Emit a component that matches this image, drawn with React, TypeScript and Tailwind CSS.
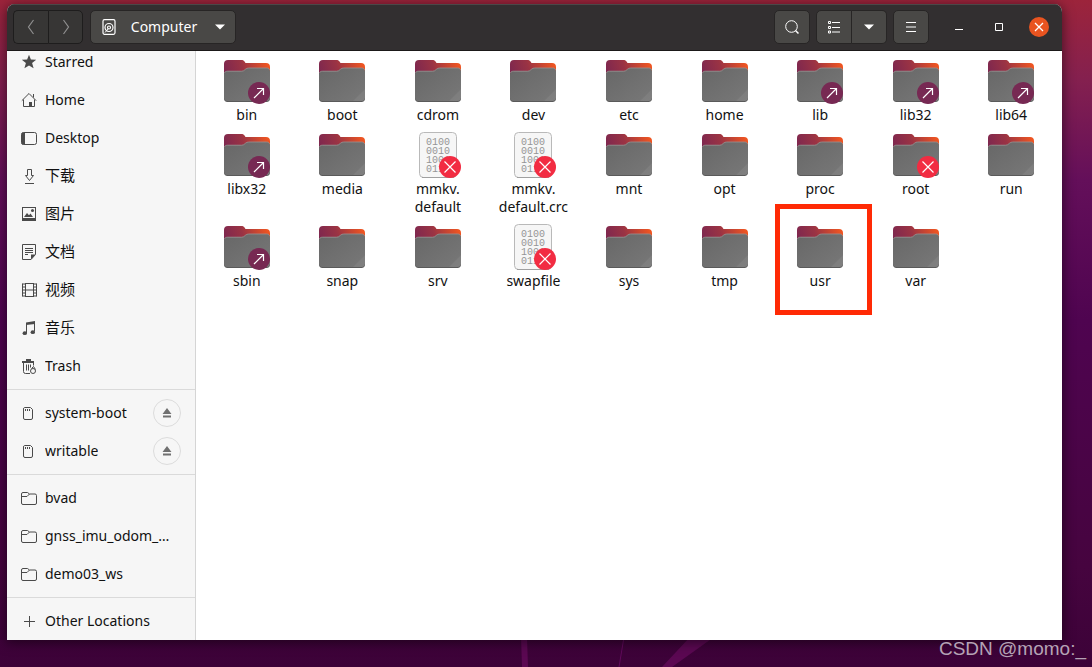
import type { ReactNode } from "react";

type Badge = "link" | "locked";

interface Entry {
  name: string;
  lines?: string[];
  kind?: "folder" | "binary";
  badge?: Badge;
  marked?: boolean;
}

const entries: Entry[] = [
  { name: "bin", badge: "link" },
  { name: "boot" },
  { name: "cdrom" },
  { name: "dev" },
  { name: "etc" },
  { name: "home" },
  { name: "lib", badge: "link" },
  { name: "lib32", badge: "link" },
  { name: "lib64", badge: "link" },
  { name: "libx32", badge: "link" },
  { name: "media" },
  { name: "mmkv.default", lines: ["mmkv.", "default"], kind: "binary", badge: "locked" },
  { name: "mmkv.default.crc", lines: ["mmkv.", "default.crc"], kind: "binary", badge: "locked" },
  { name: "mnt" },
  { name: "opt" },
  { name: "proc" },
  { name: "root", badge: "locked" },
  { name: "run" },
  { name: "sbin", badge: "link" },
  { name: "snap" },
  { name: "srv" },
  { name: "swapfile", kind: "binary", badge: "locked" },
  { name: "sys" },
  { name: "tmp" },
  { name: "usr", marked: true },
  { name: "var" },
];

function Icon({ children, size = 16 }: { children: ReactNode; size?: number }) {
  return (
    <svg
      width={size}
      height={size}
      viewBox="0 0 16 16"
      fill="none"
      stroke="currentColor"
      className="shrink-0"
      aria-hidden="true"
    >
      {children}
    </svg>
  );
}

const StarIcon = () => (
  <Icon>
    <path
      d="M8 .8l1.900 4.800 5.300.2-4.100 3.300 1.500 5.200L8 11.500l-4.600 2.800 1.500-5.200L.8 5.800l5.300-.2z"
      fill="currentColor"
      stroke="none"
    />
  </Icon>
);

const HomeIcon = () => (
  <Icon>
    <path d="M.8 8.700L8 1.500l7.200 7.200M2.500 7.500v7h11v-7M12.500 2v3.500" />
    <path d="M8 10h3v5H8z" fill="currentColor" stroke="none" />
  </Icon>
);

const DesktopIcon = () => (
  <Icon>
    <rect x=".5" y="2.500" width="15" height="12" rx="2" />
    <path d="M2 2.500h2v12H2a1.500 1.500 0 0 1-1.500-1.500V4A1.500 1.500 0 0 1 2 2.500z" fill="currentColor" stroke="none" />
  </Icon>
);

const DownloadIcon = () => (
  <Icon>
    <path d="M6.500 1.500h4v6h2l-4 5-4-5h2zM4 15.500h9" />
  </Icon>
);

const PicturesIcon = () => (
  <Icon>
    <rect x="1.500" y="1.500" width="13" height="13" />
    <path d="M1.500 12h13v2.500h-13zM3 11l3-4 2 2.200L9.500 7.500 12 11z" fill="currentColor" stroke="none" />
    <circle cx="11.500" cy="4.500" r="1.500" fill="currentColor" stroke="none" />
  </Icon>
);

const DocumentsIcon = () => (
  <Icon>
    <path d="M10 15.500H1.500v-15h13v10M4 4.500h8M4 6.500h8M4 8.500h8M4 10.500h3M10 15.500l4.500-5" />
    <path d="M10 15.500v-5h4.500z" fill="currentColor" stroke="none" />
  </Icon>
);

const VideosIcon = () => (
  <Icon>
    <path d="M4.500 1.500h8v13h-8zM4.500 8h8M4 1.500h9M4 14.500h9" />
    <path d="M1.500 1.500v13M15.500 1.500v13" />
    <path d="M3 1.500v13M14 1.500v13" strokeWidth="3" strokeDasharray="1 2" />
  </Icon>
);

const MusicIcon = () => (
  <Icon>
    <path d="M5.500 13V3.500M13.500 11.500V2" />
    <path d="M5 2.500L14 1v3L5 5z" fill="currentColor" stroke="none" />
    <ellipse cx="3.800" cy="13.200" rx="2.200" ry="1.900" fill="currentColor" stroke="none" />
    <ellipse cx="11.800" cy="12.200" rx="2.200" ry="1.900" fill="currentColor" stroke="none" />
  </Icon>
);

const TrashIcon = () => (
  <Icon>
    <path d="M1 3h12v2H1zM5 1h5v2H5z" fill="currentColor" stroke="none" />
    <path d="M2.500 4v9.500a2 2 0 0 0 2 2H9M12.500 4v3.500M5.500 6.500v6M7.500 6.500v6M9.500 6.500v3" />
    <circle cx="12" cy="13" r="2.500" />
    <path d="M10.500 10.500l2-2 2 3" />
  </Icon>
);

const CardIcon = () => (
  <Icon>
    <path d="M3.500 2.500h6l2 2V13a1.500 1.500 0 0 1-1.500 1.500H4A1.500 1.500 0 0 1 2.500 13V4a1.500 1.500 0 0 1 1-1.500z" />
    <path d="M4.500 4v2M6.500 4v2M8.500 4v2" />
  </Icon>
);

const FolderOutlineIcon = () => (
  <Icon>
    <path d="M.5 13v-9a1.500 1.500 0 0 1 1.500-1.500h4.500L8.500 4H14a1.500 1.500 0 0 1 1.500 1.500V13a1.500 1.500 0 0 1-1.500 1.500H2A1.500 1.500 0 0 1 .5 13z" />
    <path d="M.5 6.500H6L8.500 4" />
  </Icon>
);

const PlusIcon = () => (
  <Icon>
    <path d="M8.500 3v11M3 8.500h11" />
  </Icon>
);

const CaretIcon = () => (
  <svg width="10" height="6" viewBox="0 0 10 6" fill="currentColor" aria-hidden="true">
    <path d="M0 .5h10L5 5.500z" />
  </svg>
);

const places = [
  { label: "Starred", icon: <StarIcon /> },
  { label: "Home", icon: <HomeIcon /> },
  { label: "Desktop", icon: <DesktopIcon /> },
  { label: "下载", icon: <DownloadIcon />, cjk: true },
  { label: "图片", icon: <PicturesIcon />, cjk: true },
  { label: "文档", icon: <DocumentsIcon />, cjk: true },
  { label: "视频", icon: <VideosIcon />, cjk: true },
  { label: "音乐", icon: <MusicIcon />, cjk: true },
  { label: "Trash", icon: <TrashIcon /> },
];

const drives = ["system-boot", "writable"];
const bookmarks = ["bvad", "gnss_imu_odom_…", "demo03_ws"];

function BadgeMark({ type }: { type: Badge }) {
  return type === "link" ? (
    <g>
      <circle cx="36" cy="36" r="11" fill="#772953" />
      <path d="M31 41l9.500-9.500M34 31.500h6.500V38" fill="none" stroke="#fff" strokeWidth="1.200" />
    </g>
  ) : (
    <g>
      <circle cx="36" cy="36" r="11" fill="#f22c42" />
      <path d="M30.500 30.500l11 11M41.500 30.500l-11 11" stroke="#fff" strokeWidth="1.200" />
    </g>
  );
}

function EntryIcon({ kind = "folder", badge }: Entry) {
  return (
    <svg width="48" height="48" viewBox="0 0 48 48" aria-hidden="true">
      {kind === "folder" ? (
        <g>
          <path
            d="M1 7a4 4 0 0 1 4-4h13.500c1.500 0 2.300.5 3 1.500l1 1.500H43a4 4 0 0 1 4 4v20H1z"
            fill="url(#folder-back)"
          />
          <path
            d="M1 20.500c0-2.500 1.200-3.500 3.500-3.500h14.300c1.400 0 2-.4 2.900-1.400l.8-.9c1-1.100 1.800-1.700 3.300-1.700h17.700c2.300 0 3.500 1.200 3.500 3.500v25c0 2.300-1.200 3.500-3.500 3.500h-39C2.200 45 1 43.800 1 41.500z"
            fill="#5a5a5a"
          />
          <path
            d="M1 17.500c0-2.500 1.200-3.500 3.500-3.500h14.300c1.400 0 2-.4 2.900-1.400l.8-.4c1-.8 1.800-1.200 3.300-1.200h17.700c2.300 0 3.500 1.200 3.500 3.500v26c0 2.300-1.200 3.500-3.500 3.500h-39C2.200 44 1 42.800 1 40.500z"
            fill="url(#folder-front)"
          />
          <path
            d="M1.500 16c.4-1.200 1.300-1.800 3-1.800h14.300c1.400 0 2.100-.5 2.900-1.300l.8-.7c1-.8 1.800-1.200 3.300-1.200h17.700c1.700 0 2.700.6 3 1.800"
            fill="none"
            stroke="#9b9292"
            strokeWidth=".8"
          />
          <path d="M47 32L35 44h8.500c2.300 0 3.500-1.200 3.500-3.500z" fill="#fff" opacity=".06" />
        </g>
      ) : (
        <g>
          <rect x="5.500" y="1.500" width="37" height="45" rx="4" fill="#f6f6f6" stroke="#b9b9b9" />
          <path d="M8 46.500h32" stroke="#a0a0a0" />
          <g fill="#959595" fontFamily="Liberation Mono" fontSize="10">
            <text x="12" y="14">0100</text>
            <text x="12" y="23">0010</text>
            <text x="12" y="32">1001</text>
            <text x="12" y="41">0110</text>
          </g>
        </g>
      )}
      {badge && <BadgeMark type={badge} />}
    </svg>
  );
}

function EntryTile(entry: Entry) {
  const lines = entry.lines ?? [entry.name];
  return (
    <li className="relative flex flex-col items-center gap-px pb-[7px]">
      <EntryIcon {...entry} />
      <span className="text-center leading-[18px]">
        {lines.map((line) => (
          <span key={line} className="block">
            {line}
          </span>
        ))}
      </span>
      {entry.marked && (
        <span className="absolute -top-[19px] left-[3px] h-[111px] w-[97px] border-[5px] border-[#ff2a05]" />
      )}
    </li>
  );
}

interface SideRowProps {
  icon: ReactNode;
  label: string;
  cjk?: boolean;
  children?: ReactNode;
}

function SideRow({ icon, label, cjk, children }: SideRowProps) {
  return (
    <li className="flex h-[38px] items-center px-[14px]">
      <a href="#" className="flex min-w-0 flex-1 items-center gap-2">
        <span className="text-[#4a4a4a]">{icon}</span>
        <span className={`truncate pb-[2px] ${cjk ? "text-[15px]" : ""}`}>{label}</span>
      </a>
      {children}
    </li>
  );
}

const Divider = () => <hr className="my-1 border-[#dadada]" />;

function HeaderBar() {
  const btn =
    "flex h-[34px] items-center justify-center border border-[#272525] bg-[#494846] text-white";
  const nav = "flex h-[34px] w-[35px] items-center justify-center border border-[#1e1d1d] bg-[#373635] text-[#8f8f8f]";
  return (
    <header className="flex h-[47px] shrink-0 items-center border-b border-[#1b1919] bg-[#322f30] pr-[13px] pl-[6px] shadow-[inset_0_1px_0_#4b4848]">
      <div className="flex">
        <button aria-label="Back" className={`${nav} rounded-l-[5px] border-r-0`}>
          <Icon>
            <path d="M10.500 1L5.500 8l5 7" strokeWidth="1.200" />
          </Icon>
        </button>
        <button aria-label="Forward" className={`${nav} rounded-r-[5px]`}>
          <Icon>
            <path d="M5.500 1l5 7-5 7" strokeWidth="1.200" />
          </Icon>
        </button>
      </div>
      <button className={`${btn} ml-[7px] w-[146px] rounded-[5px]`}>
        <Icon>
          <rect x="2" y=".7" width="12" height="14.600" rx="1.500" strokeWidth="1.200" />
          <circle cx="8" cy="8.500" r="4" strokeWidth="1.200" />
          <circle cx="8" cy="8.500" r="1.500" strokeWidth="1.200" />
          <path d="M4 13.500l3.500-4" />
        </Icon>
        <span className="mr-[18px] ml-[14px] pb-[2px]">Computer</span>
        <CaretIcon />
      </button>

      <div className="ml-auto flex items-center gap-[6px]">
        <button aria-label="Search" className={`${btn} w-9 rounded-[5px]`}>
          <Icon>
            <circle cx="7.500" cy="7.500" r="5.800" />
            <path d="M11.500 11.500l3 3" strokeWidth="1.500" />
          </Icon>
        </button>
        <div className="flex">
          <button aria-label="List view" className={`${btn} w-9 rounded-l-[5px]`}>
            <Icon>
              <path d="M2.500 2.500h2v2h-2zM2.500 7.500h2v2h-2zM2.500 12h2v2h-2zM6 3.500h8M6 8.500h8M6 13h8" />
            </Icon>
          </button>
          <button aria-label="View options" className={`${btn} w-[35px] rounded-r-[5px] border-l-0`}>
            <CaretIcon />
          </button>
        </div>
        <button aria-label="Menu" className={`${btn} w-9 rounded-[5px]`}>
          <Icon>
            <path d="M3 3.500h10M3 8h10M3 12.500h10" />
          </Icon>
        </button>
      </div>

      <div className="ml-5 flex gap-5 text-white">
        <button aria-label="Minimize" className="flex size-5 items-center justify-center">
          <Icon>
            <path d="M4 10.500h8" />
          </Icon>
        </button>
        <button aria-label="Maximize" className="flex size-5 items-center justify-center">
          <Icon>
            <path d="M4.500 4.500h7v7h-7z" />
          </Icon>
        </button>
        <button aria-label="Close" className="flex size-5 items-center justify-center rounded-full bg-[#e95420]">
          <Icon>
            <path d="M4 4l8 8M12 4l-8 8" strokeWidth="1.300" />
          </Icon>
        </button>
      </div>
    </header>
  );
}

function Sidebar() {
  return (
    <nav className="w-[189px] shrink-0 overflow-hidden border-r border-[#d5d5d5] bg-[#f6f6f6]">
      {/* the list is scrolled down a little, so the first row is clipped */}
      <ul className="-mt-2">
        {places.map((place) => (
          <SideRow key={place.label} {...place} />
        ))}
      </ul>
      <Divider />
      <ul>
        {drives.map((name) => (
          <SideRow key={name} label={name} icon={<CardIcon />}>
            <button
              aria-label={`Eject ${name}`}
              className="flex size-7 items-center justify-center rounded-full border border-[#dcdcdc] text-[#707070]"
            >
              <Icon>
                <path d="M8 3l4.500 6h-9zM4 10.500h8v2H4z" fill="currentColor" stroke="none" />
              </Icon>
            </button>
          </SideRow>
        ))}
      </ul>
      <Divider />
      <ul>
        {bookmarks.map((name) => (
          <SideRow key={name} label={name} icon={<FolderOutlineIcon />} />
        ))}
      </ul>
      <Divider />
      <ul>
        <SideRow label="Other Locations" icon={<PlusIcon />} />
      </ul>
    </nav>
  );
}

export default function App() {
  return (
    <div className="relative flex h-screen flex-col overflow-hidden bg-[linear-gradient(180deg,#9c243b_0%,#84204f_12%,#640f5a_27%,#4f0450_48%,#46043f_85%,#3c0238_100%)] pt-1 pr-[30px] pb-[27px] pl-[7px] font-['Noto_Sans','Noto_Sans_CJK_SC',sans-serif] text-[14px] text-[#111]">
      {/* Gradients shared by every folder */}
      <svg width="0" height="0" className="absolute" aria-hidden="true">
        <defs>
          <linearGradient id="folder-back" x1="0" x2="1" y1="0.600" y2="0.400">
            <stop offset="0" stopColor="#7b2650" />
            <stop offset=".45" stopColor="#9a3344" />
            <stop offset="1" stopColor="#ee5522" />
          </linearGradient>
          <linearGradient id="folder-front" x1="0" x2="1" y1="0" y2="1">
            <stop offset="0" stopColor="#676767" />
            <stop offset="1" stopColor="#787878" />
          </linearGradient>
        </defs>
      </svg>

      {/* Wallpaper streaks */}
      <svg className="absolute bottom-0 left-[500px]" width="240" height="30" aria-hidden="true">
        <path d="M21 0h6l1 30h-6zM190 0h24l-42 30h-10z" fill="#5b0852" />
        <path d="M124 0l-5 30" stroke="#610a5c" />
      </svg>

      <div className="relative flex min-h-0 flex-1 flex-col overflow-hidden rounded-t-lg bg-white shadow-[0_2px_12px_1px_rgba(0,0,0,0.5)]">
        <HeaderBar />
        <div className="flex min-h-0 flex-1">
          <Sidebar />
          <main className="min-w-0 flex-1 px-[3px] pt-[6px]">
            <ul className="grid grid-cols-9">
              {entries.map((entry) => (
                <EntryTile key={entry.name} {...entry} />
              ))}
            </ul>
          </main>
        </div>
      </div>

      <p className="absolute right-[6px] bottom-[6px] font-['Liberation_Sans',sans-serif] text-[19px] leading-6 text-[#b5a3b5]">
        CSDN @momo:_
      </p>
    </div>
  );
}
